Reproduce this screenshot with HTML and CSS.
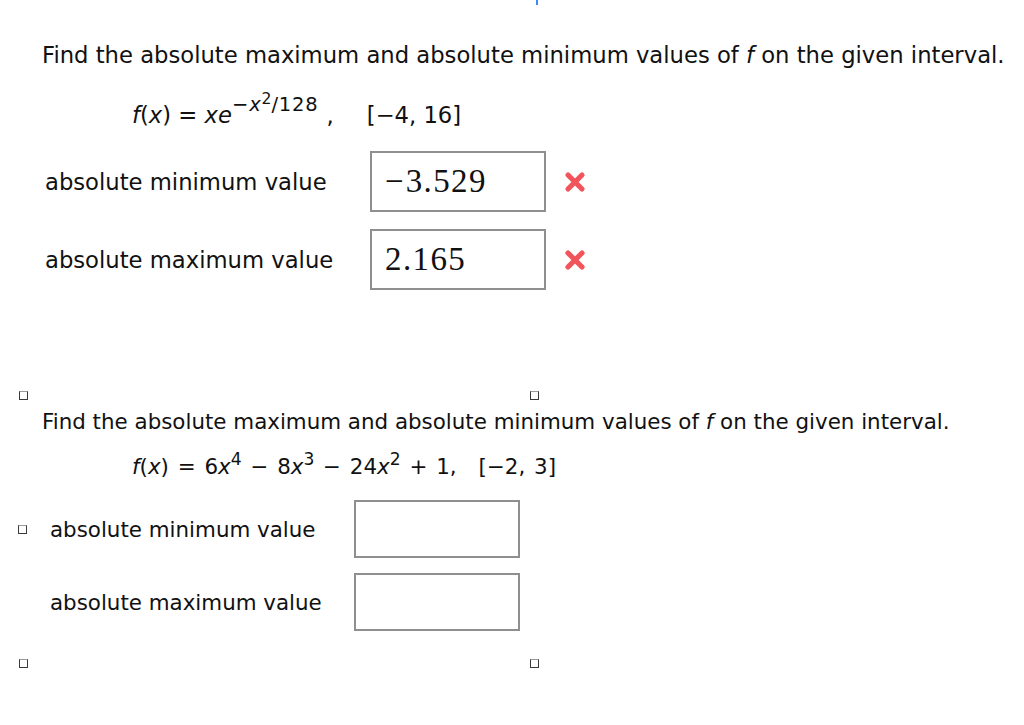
FILE: index.html
```html
<!DOCTYPE html>
<html>
<head>
<meta charset="utf-8">
<link rel="stylesheet" href="styles.css">
</head>
<body>
<div class="tick"></div>
<section class="q q1">
  <p class="prompt">Find the absolute maximum and absolute minimum values of <i>f</i> on the given interval.</p>
  <p class="formula"><i>f</i>(<i>x</i>) = <i>xe</i><sup class="exp">−<i>x</i><sup class="exp2">2</sup>/128</sup><span class="comma">,</span><span class="interval">[−4, 16]</span></p>
  <div class="row">
    <span class="label">absolute minimum value</span>
    <div class="answer"><span class="neg">−</span>3.529</div>
    <svg class="wrong" viewBox="0 0 24 24" width="24" height="24"><path d="M5 5 L19 19 M19 5 L5 19" stroke="#f2545c" stroke-width="5.2" stroke-linecap="round" fill="none"/></svg>
  </div>
  <div class="row">
    <span class="label">absolute maximum value</span>
    <div class="answer">2.165</div>
    <svg class="wrong" viewBox="0 0 24 24" width="24" height="24"><path d="M5 5 L19 19 M19 5 L5 19" stroke="#f2545c" stroke-width="5.2" stroke-linecap="round" fill="none"/></svg>
  </div>
</section>
<section class="q q2">
  <div class="marks"><span class="cb"></span><span class="cb cb-right"></span></div>
  <p class="prompt">Find the absolute maximum and absolute minimum values of <i>f</i> on the given interval.</p>
  <p class="formula"><i>f</i>(<i>x</i>) = 6<i>x</i><sup>4</sup> − 8<i>x</i><sup>3</sup> − 24<i>x</i><sup>2</sup> + 1,<span class="interval">[−2, 3]</span></p>
  <div class="row">
    <span class="cell-cb"><span class="cb"></span></span>
    <span class="label">absolute minimum value</span>
    <div class="answer"></div>
  </div>
  <div class="row">
    <span class="cell-cb"></span>
    <span class="label">absolute maximum value</span>
    <div class="answer"></div>
  </div>
  <div class="marks marks-bottom"><span class="cb"></span><span class="cb cb-right"></span></div>
</section>
</body>
</html>
```
FILE: styles.css
```css
html, body {
  margin: 0;
  padding: 0;
  background: #ffffff;
}
body {
  font-family: "DejaVu Sans", Verdana, sans-serif;
  color: #111111;
  position: relative;
  width: 1024px;
  height: 725px;
  overflow: hidden;
}
.tick {
  position: absolute;
  left: 536px;
  top: 0;
  width: 2px;
  height: 5px;
  background: #3b8df0;
}
.q p {
  margin: 0;
}
.q1 {
  padding-top: 42px;
  font-size: 22.7px;
}
.q1 .prompt {
  padding-left: 42px;
  line-height: 26px;
}
.q1 .formula {
  margin-top: 31px;
  padding-left: 132px;
  height: 30px;
  line-height: 30px;
  white-space: nowrap;
}
.formula sup {
  font-size: 0.8em;
  line-height: 0;
  vertical-align: 0.5em;
}
.q1 .formula sup.exp {
  font-size: 0.86em;
  letter-spacing: 0.8px;
  vertical-align: 0.6em;
}
.formula sup.exp2 {
  font-size: 0.8em;
  letter-spacing: 0;
  vertical-align: 0.45em;
}
.q1 .comma {
  margin-left: 8px;
}
.q1 .interval {
  margin-left: 33px;
}
.q1 .row {
  display: grid;
  grid-template-columns: 325px 176px 24px;
  align-items: center;
  padding-left: 45px;
  margin-top: 22px;
}
.q1 .row + .row {
  margin-top: 17px;
}
.q1 .wrong {
  margin-left: 17px;
}
.answer {
  box-sizing: border-box;
  height: 61px;
  border: 2px solid #8f8f8f;
  display: flex;
  align-items: center;
  padding-left: 13px;
  font-family: "Liberation Serif", "Times New Roman", serif;
  font-size: 33px;
  letter-spacing: 1.4px;
  color: #111111;
}
.answer .neg {
  letter-spacing: 2px;
}
.wrong {
  display: block;
  filter: blur(0.5px);
}
.q2 {
  margin-top: 101px;
  font-size: 21.4px;
}
.marks {
  display: flex;
  height: 9px;
  padding-left: 19px;
}
.cb {
  display: block;
  box-sizing: border-box;
  width: 9px;
  height: 9px;
  border: 1px solid #3a3a3a;
  border-top-color: #9a9a9a;
  background: #ffffff;
}
.cb-right {
  margin-left: 502px;
}
.q2 .prompt {
  margin-top: 10px;
  padding-left: 42px;
  line-height: 24px;
}
.q2 .formula {
  margin-top: 19px;
  padding-left: 132px;
  line-height: 28px;
  white-space: nowrap;
  word-spacing: 2px;
}
.q2 .interval {
  margin-left: 22px;
}
.q2 .row {
  display: grid;
  grid-template-columns: 50px 304px 166px;
  align-items: center;
  margin-top: 19px;
}
.q2 .row + .row {
  margin-top: 15px;
}
.q2 .answer {
  height: 58px;
}
.cell-cb {
  display: flex;
  padding-left: 18px;
}
.marks-bottom {
  margin-top: 28px;
}
```
